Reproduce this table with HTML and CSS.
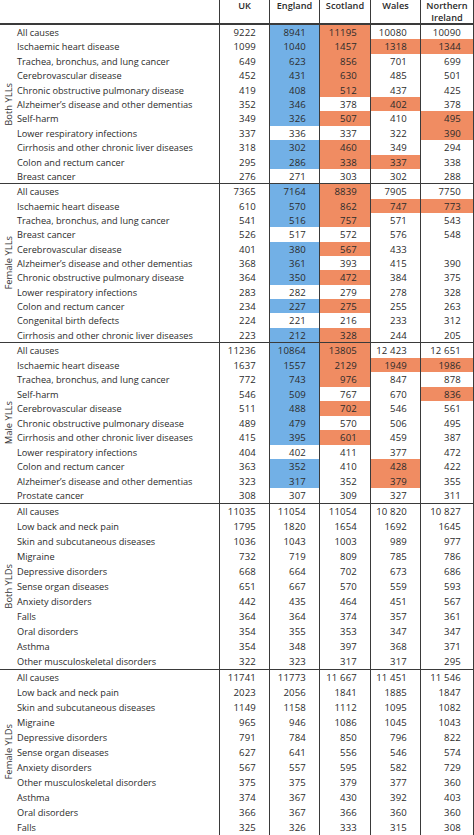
FILE: index.html
```html
<!DOCTYPE html>
<html>
<head>
<meta charset="utf-8">
<link rel="stylesheet" href="styles.css">
</head>
<body>
<div class="table">
  <div class="head">
    <div class="h-blank"></div>
    <div class="h">UK</div>
    <div class="h">England</div>
    <div class="h">Scotland</div>
    <div class="h">Wales</div>
    <div class="h">Northern<br>Ireland</div>
  </div>

  <section class="sec s1">
    <div class="side"><span>Both YLLs</span></div>
    <div class="lbl">All causes</div><div class="n">9222</div><div class="n b">8941</div><div class="n o">11195</div><div class="n">10080</div><div class="n">10090</div>
    <div class="lbl">Ischaemic heart disease</div><div class="n">1099</div><div class="n b">1040</div><div class="n o">1457</div><div class="n o">1318</div><div class="n o">1344</div>
    <div class="lbl">Trachea, bronchus, and lung cancer</div><div class="n">649</div><div class="n b">623</div><div class="n o">856</div><div class="n">701</div><div class="n">699</div>
    <div class="lbl">Cerebrovascular disease</div><div class="n">452</div><div class="n b">431</div><div class="n o">630</div><div class="n">485</div><div class="n">501</div>
    <div class="lbl">Chronic obstructive pulmonary disease</div><div class="n">419</div><div class="n b">408</div><div class="n o">512</div><div class="n">437</div><div class="n">425</div>
    <div class="lbl">Alzheimer’s disease and other dementias</div><div class="n">352</div><div class="n b">346</div><div class="n">378</div><div class="n o">402</div><div class="n">378</div>
    <div class="lbl">Self-harm</div><div class="n">349</div><div class="n b">326</div><div class="n o">507</div><div class="n">410</div><div class="n o">495</div>
    <div class="lbl">Lower respiratory infections</div><div class="n">337</div><div class="n">336</div><div class="n">337</div><div class="n">322</div><div class="n o">390</div>
    <div class="lbl">Cirrhosis and other chronic liver diseases</div><div class="n">318</div><div class="n b">302</div><div class="n o">460</div><div class="n">349</div><div class="n">294</div>
    <div class="lbl">Colon and rectum cancer</div><div class="n">295</div><div class="n b">286</div><div class="n o">338</div><div class="n o">337</div><div class="n">338</div>
    <div class="lbl">Breast cancer</div><div class="n">276</div><div class="n">271</div><div class="n">303</div><div class="n">302</div><div class="n">288</div>
  </section>

  <section class="sec s2">
    <div class="side"><span>Female YLLs</span></div>
    <div class="lbl">All causes</div><div class="n">7365</div><div class="n b">7164</div><div class="n o">8839</div><div class="n">7905</div><div class="n">7750</div>
    <div class="lbl">Ischaemic heart disease</div><div class="n">610</div><div class="n b">570</div><div class="n o">862</div><div class="n o">747</div><div class="n o">773</div>
    <div class="lbl">Trachea, bronchus, and lung cancer</div><div class="n">541</div><div class="n b">516</div><div class="n o">757</div><div class="n">571</div><div class="n">543</div>
    <div class="lbl">Breast cancer</div><div class="n">526</div><div class="n">517</div><div class="n">572</div><div class="n">576</div><div class="n">548</div>
    <div class="lbl">Cerebrovascular disease</div><div class="n">401</div><div class="n b">380</div><div class="n o">567</div><div class="n">433</div><div class="n"></div>
    <div class="lbl">Alzheimer’s disease and other dementias</div><div class="n">368</div><div class="n b">361</div><div class="n">393</div><div class="n">415</div><div class="n">390</div>
    <div class="lbl">Chronic obstructive pulmonary disease</div><div class="n">364</div><div class="n b">350</div><div class="n o">472</div><div class="n">384</div><div class="n">375</div>
    <div class="lbl">Lower respiratory infections</div><div class="n">283</div><div class="n">282</div><div class="n">279</div><div class="n">278</div><div class="n">328</div>
    <div class="lbl">Colon and rectum cancer</div><div class="n">234</div><div class="n b">227</div><div class="n o">275</div><div class="n">255</div><div class="n">263</div>
    <div class="lbl">Congenital birth defects</div><div class="n">224</div><div class="n">221</div><div class="n">216</div><div class="n">233</div><div class="n">312</div>
    <div class="lbl">Cirrhosis and other chronic liver diseases</div><div class="n">223</div><div class="n b">212</div><div class="n o">328</div><div class="n">244</div><div class="n">205</div>
  </section>

  <section class="sec s3">
    <div class="side"><span>Male YLLs</span></div>
    <div class="lbl">All causes</div><div class="n">11236</div><div class="n b">10864</div><div class="n o">13805</div><div class="n">12 423</div><div class="n">12 651</div>
    <div class="lbl">Ischaemic heart disease</div><div class="n">1637</div><div class="n b">1557</div><div class="n o">2129</div><div class="n o">1949</div><div class="n o">1986</div>
    <div class="lbl">Trachea, bronchus, and lung cancer</div><div class="n">772</div><div class="n b">743</div><div class="n o">976</div><div class="n">847</div><div class="n">878</div>
    <div class="lbl">Self-harm</div><div class="n">546</div><div class="n b">509</div><div class="n">767</div><div class="n">670</div><div class="n o">836</div>
    <div class="lbl">Cerebrovascular disease</div><div class="n">511</div><div class="n b">488</div><div class="n o">702</div><div class="n">546</div><div class="n">561</div>
    <div class="lbl">Chronic obstructive pulmonary disease</div><div class="n">489</div><div class="n b">479</div><div class="n">570</div><div class="n">506</div><div class="n">495</div>
    <div class="lbl">Cirrhosis and other chronic liver diseases</div><div class="n">415</div><div class="n b">395</div><div class="n o">601</div><div class="n">459</div><div class="n">387</div>
    <div class="lbl">Lower respiratory infections</div><div class="n">404</div><div class="n">402</div><div class="n">411</div><div class="n">377</div><div class="n">472</div>
    <div class="lbl">Colon and rectum cancer</div><div class="n">363</div><div class="n b">352</div><div class="n">410</div><div class="n o">428</div><div class="n">422</div>
    <div class="lbl">Alzheimer’s disease and other dementias</div><div class="n">323</div><div class="n b">317</div><div class="n">352</div><div class="n o">379</div><div class="n">355</div>
    <div class="lbl">Prostate cancer</div><div class="n">308</div><div class="n">307</div><div class="n">309</div><div class="n">327</div><div class="n">311</div>
  </section>

  <section class="sec s4">
    <div class="side"><span>Both YLDs</span></div>
    <div class="lbl">All causes</div><div class="n">11035</div><div class="n">11054</div><div class="n">11054</div><div class="n">10 820</div><div class="n">10 827</div>
    <div class="lbl">Low back and neck pain</div><div class="n">1795</div><div class="n">1820</div><div class="n">1654</div><div class="n">1692</div><div class="n">1645</div>
    <div class="lbl">Skin and subcutaneous diseases</div><div class="n">1036</div><div class="n">1043</div><div class="n">1003</div><div class="n">989</div><div class="n">977</div>
    <div class="lbl">Migraine</div><div class="n">732</div><div class="n">719</div><div class="n">809</div><div class="n">785</div><div class="n">786</div>
    <div class="lbl">Depressive disorders</div><div class="n">668</div><div class="n">664</div><div class="n">702</div><div class="n">673</div><div class="n">686</div>
    <div class="lbl">Sense organ diseases</div><div class="n">651</div><div class="n">667</div><div class="n">570</div><div class="n">559</div><div class="n">593</div>
    <div class="lbl">Anxiety disorders</div><div class="n">442</div><div class="n">435</div><div class="n">464</div><div class="n">451</div><div class="n">567</div>
    <div class="lbl">Falls</div><div class="n">364</div><div class="n">364</div><div class="n">374</div><div class="n">357</div><div class="n">361</div>
    <div class="lbl">Oral disorders</div><div class="n">354</div><div class="n">355</div><div class="n">353</div><div class="n">347</div><div class="n">347</div>
    <div class="lbl">Asthma</div><div class="n">354</div><div class="n">348</div><div class="n">397</div><div class="n">368</div><div class="n">371</div>
    <div class="lbl">Other musculoskeletal disorders</div><div class="n">322</div><div class="n">323</div><div class="n">317</div><div class="n">317</div><div class="n">295</div>
  </section>

  <section class="sec s5">
    <div class="side"><span>Female YLDs</span></div>
    <div class="lbl">All causes</div><div class="n">11741</div><div class="n">11773</div><div class="n">11 667</div><div class="n">11 451</div><div class="n">11 546</div>
    <div class="lbl">Low back and neck pain</div><div class="n">2023</div><div class="n">2056</div><div class="n">1841</div><div class="n">1885</div><div class="n">1847</div>
    <div class="lbl">Skin and subcutaneous diseases</div><div class="n">1149</div><div class="n">1158</div><div class="n">1112</div><div class="n">1095</div><div class="n">1082</div>
    <div class="lbl">Migraine</div><div class="n">965</div><div class="n">946</div><div class="n">1086</div><div class="n">1045</div><div class="n">1043</div>
    <div class="lbl">Depressive disorders</div><div class="n">791</div><div class="n">784</div><div class="n">850</div><div class="n">796</div><div class="n">822</div>
    <div class="lbl">Sense organ diseases</div><div class="n">627</div><div class="n">641</div><div class="n">556</div><div class="n">546</div><div class="n">574</div>
    <div class="lbl">Anxiety disorders</div><div class="n">567</div><div class="n">557</div><div class="n">595</div><div class="n">582</div><div class="n">729</div>
    <div class="lbl">Other musculoskeletal disorders</div><div class="n">375</div><div class="n">375</div><div class="n">379</div><div class="n">377</div><div class="n">360</div>
    <div class="lbl">Asthma</div><div class="n">374</div><div class="n">367</div><div class="n">430</div><div class="n">392</div><div class="n">403</div>
    <div class="lbl">Oral disorders</div><div class="n">366</div><div class="n">367</div><div class="n">366</div><div class="n">360</div><div class="n">360</div>
    <div class="lbl">Falls</div><div class="n">325</div><div class="n">326</div><div class="n">333</div><div class="n">315</div><div class="n">308</div>
  </section>
</div>
</body>
</html>
```
FILE: styles.css
```css
html, body {
  margin: 0;
  padding: 0;
  background: #ffffff;
}
body {
  font-family: "Open Sans", "Noto Sans", sans-serif;
  font-size: 9.2px;
  color: #2b2b2b;
  width: 474px;
  overflow: hidden;
}
.table {
  width: 474px;
}
.head {
  display: grid;
  grid-template-columns: 219px 50px 50px 51px 50px 54px;
  height: 23px;
  border-bottom: 2px solid #3a3a3a;
}
.h {
  border-left: 1px solid #3a3a3a;
  font-weight: 600;
  font-size: 9.2px;
  text-align: center;
  line-height: 11.5px;
  padding-top: 0;
  color: #2b2b2b;
}
.h:last-child {
  border-right: 1px solid #3a3a3a;
}
.sec {
  display: grid;
  grid-template-columns: 17px 202px 50px 50px 51px 50px 54px;
  border-bottom: 1px solid #3a3a3a;
}
.s1 { grid-template-rows: repeat(11, 14.4px); }
.s2 { grid-template-rows: repeat(11, 14.35px); }
.s3 { grid-template-rows: repeat(11, 14.5px); }
.s4 { grid-template-rows: repeat(11, 15px); }
.s5 { grid-template-rows: repeat(11, 15px); border-bottom-color: #bdbdbd; }
.side {
  grid-row: 1 / span 11;
  grid-column: 1;
  display: flex;
  align-items: center;
  justify-content: center;
}
.side span {
  writing-mode: vertical-rl;
  transform: rotate(180deg);
  font-size: 9.4px;
  white-space: nowrap;
  color: #333;
}
.lbl {
  white-space: nowrap;
  line-height: 14px;
  padding-top: 1px;
}
.n {
  border-left: 1px solid #3a3a3a;
  text-align: right;
  padding-right: 13px;
  line-height: 14px;
  padding-top: 1px;
  white-space: nowrap;
  font-size: 9.6px;
  letter-spacing: 0.15px;
}
.n:nth-child(6n+1) {
  border-right: 1px solid #3a3a3a;
  padding-right: 12px;
}
.s4 .n, .s5 .n { line-height: 15px; padding-top: 0; }
.s4 .lbl, .s5 .lbl { line-height: 15px; padding-top: 0; }
.b { background: #72b0e6; }
.o { background: #f08c62; }
```
